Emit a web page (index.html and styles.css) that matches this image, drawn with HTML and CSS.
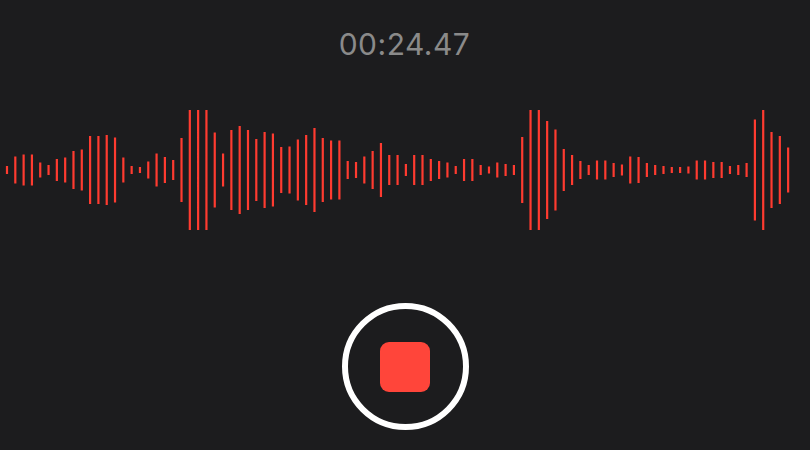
FILE: index.html
```html
<!DOCTYPE html>
<html lang="en">
<head>
    <meta charset="UTF-8">
    <meta name="viewport" content="width=device-width, initial-scale=1.0">
    <title>Voice recording</title>
    <link rel="stylesheet" href="styles.css">
</head>
<body>
    <div class="recorder">
        <div class="time">00:24.47</div>
        <svg id="wave" class="wave" width="810" height="120" viewBox="0 0 810 120"></svg>
        <button class="stop-btn" aria-label="Stop"><span class="stop-icon"></span></button>
    </div>
    <script src="wave.js"></script>
</body>
</html>
```

FILE: styles.css
```css
body {
    font-family: Inter, "Liberation Sans", sans-serif;
    background-color: #1c1c1e;
    margin: 0;
}
.recorder {
    height: 450px;
    display: flex;
    flex-direction: column;
    align-items: center;
    overflow: hidden;
}
.time {
    margin-top: 26px;
    margin-right: 1px;
    height: 36px;
    line-height: 36px;
    font-size: 30px;
    font-weight: 400;
    letter-spacing: 0.5px;
    color: #8a8a8a;
}
.wave {
    display: block;
    flex-shrink: 0;
    margin-top: 48px;
}
.wave path {
    stroke: #ff3b30;
    stroke-width: 2.2;
    fill: none;
}
.stop-btn {
    width: 127px;
    height: 127px;
    margin-top: 73px;
    padding: 0;
    box-sizing: border-box;
    border: 6px solid white;
    border-radius: 50%;
    background: none;
    display: flex;
    justify-content: center;
    align-items: center;
    cursor: pointer;
}
.stop-icon {
    width: 50px;
    height: 50px;
    border-radius: 9px;
    background-color: #ff453a;
}
```

FILE: wave.js
```js
const heights = [
    8, 27, 31, 31, 15, 10, 22, 25, 38, 41, 68, 68, 70, 65, 25, 8, 6, 17, 33, 26, 20, 64, 120, 120, 120, 75, 33, 80, 88, 80, 62, 76,
    73, 46, 47, 61, 70, 84, 64, 59, 59, 18, 16, 27, 38, 54, 30, 30, 12, 30, 30, 22, 18, 15, 8, 22, 22, 10, 7, 15, 12, 10, 66, 120, 120,
    98, 81, 42, 30, 18, 10, 19, 19, 14, 11, 27, 26, 14, 10, 8, 6, 6, 7, 19, 19, 16, 16, 8, 10, 14, 101, 120, 76, 68, 45
];

const startX = 7;
const pitch = 8.31;

// one path for all the bars, centred on the middle of the svg
const d = heights.map((h, i) => `M${(startX + i * pitch).toFixed(2)} ${60 - h / 2}v${h}`).join('');
const path = document.createElementNS('http://www.w3.org/2000/svg', 'path');
path.setAttribute('d', d);
document.getElementById('wave').appendChild(path);
```
